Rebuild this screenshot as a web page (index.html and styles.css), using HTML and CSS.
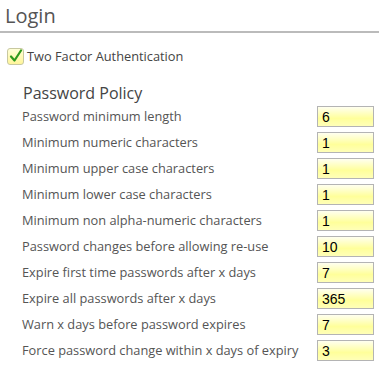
FILE: index.html
```html
<!DOCTYPE html>
<html lang="en">
	<head>
		<meta charset="UTF-8" />
		<title>Login</title>
		<link rel="stylesheet" href="styles.css">
	</head>
	<body>
		<h1 class="section-title">Login</h1>
		<div class="check-row">
			<span class="check-box">
				<svg width="14" height="14" viewBox="0 0 14 14"><path d="M2 7.5 L5.5 11.5 L12 1.5" fill="none" stroke="#2e9a1e" stroke-width="2.2" stroke-linecap="round" stroke-linejoin="round"/></svg>
			</span>
			<span class="check-label">Two Factor Authentication</span>
		</div>
		<div class="policy">
			<h2 class="policy-title">Password Policy</h2>
			<div class="field"><label>Password minimum length</label><input type="text" value="6"></div>
			<div class="field"><label>Minimum numeric characters</label><input type="text" value="1"></div>
			<div class="field"><label>Minimum upper case characters</label><input type="text" value="1"></div>
			<div class="field"><label>Minimum lower case characters</label><input type="text" value="1"></div>
			<div class="field"><label>Minimum non alpha-numeric characters</label><input type="text" value="1"></div>
			<div class="field"><label>Password changes before allowing re-use</label><input type="text" value="10"></div>
			<div class="field"><label>Expire first time passwords after x days</label><input type="text" value="7"></div>
			<div class="field"><label>Expire all passwords after x days</label><input type="text" value="365"></div>
			<div class="field"><label>Warn x days before password expires</label><input type="text" value="7"></div>
			<div class="field"><label>Force password change within x days of expiry</label><input type="text" value="3"></div>
		</div>
	</body>
</html>
```

FILE: styles.css
```css
body {
	margin: 0;
	background: #fff;
	font-family: "Open Sans", sans-serif;
	color: #555;
}

.section-title {
	margin: 0;
	padding: 2px 0 0 5px;
	height: 29px;
	font-size: 20px;
	font-weight: normal;
	line-height: 27px;
	color: #555;
	border-bottom: 2px solid #bbb;
}

.check-row {
	display: flex;
	align-items: center;
	margin: 13px 0 0 7px;
	height: 20px;
}

.check-box {
	display: flex;
	align-items: center;
	justify-content: center;
	width: 15px;
	height: 15px;
	border: 1px solid #c8c8a0;
	border-radius: 3px;
	background: linear-gradient(#ffffd8, #fff59a);
}

.check-label {
	margin-left: 3px;
	font-size: 12.8px;
	color: #444;
}

.policy {
	padding: 0 5px 0 22px;
	margin-top: 16px;
}

.policy-title {
	margin: 0 0 0 1px;
	font-size: 16px;
	font-weight: normal;
	line-height: 22px;
	height: 21px;
	color: #444;
}

.field {
	display: flex;
	align-items: center;
	justify-content: space-between;
	height: 26px;
}

.field label {
	font-size: 12.8px;
	color: #555;
}

.field input {
	box-sizing: border-box;
	width: 57px;
	height: 21px;
	padding: 1px 4px 0;
	border: 1px solid #b4b4b4;
	background: linear-gradient(#fffff0, #ffff9a 60%, #ffffb8);
	font-family: "Liberation Sans", Arial, sans-serif;
	font-size: 14px;
	color: #000;
	outline: none;
}
```
